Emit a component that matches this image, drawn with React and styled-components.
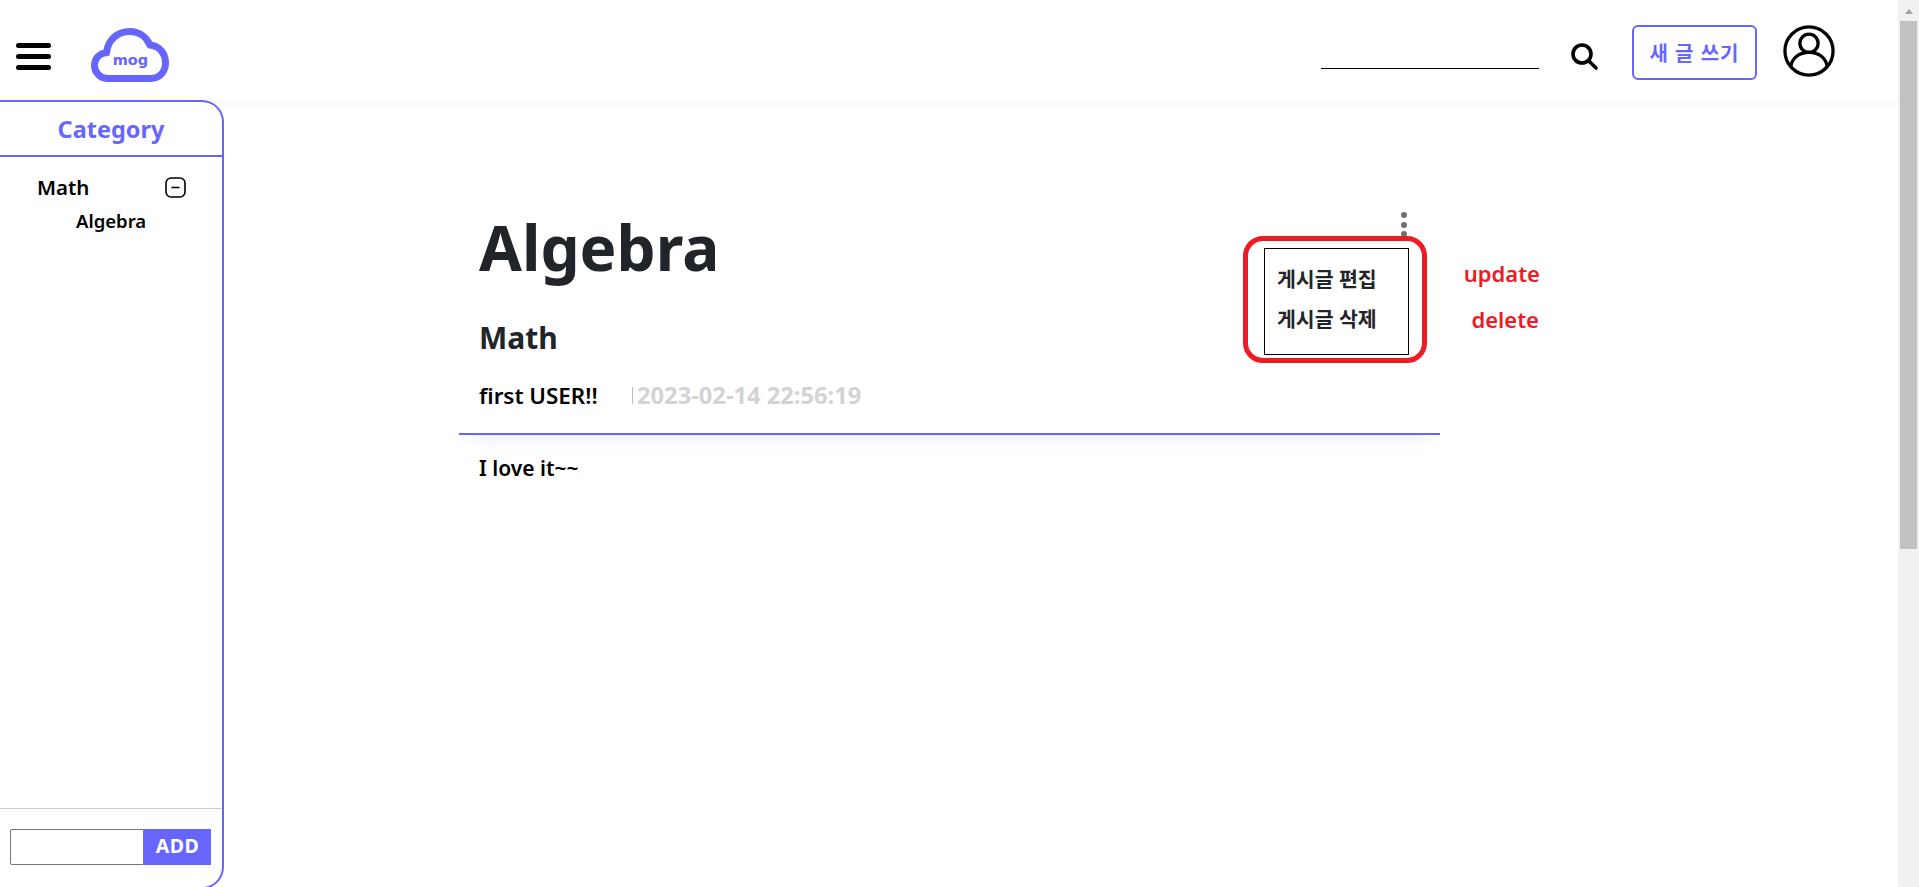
import React from 'react';
import styled, { createGlobalStyle } from 'styled-components';

const BLUE = '#6666ff';
const KR = '"Noto Sans", "Noto Sans CJK KR", sans-serif';

const GlobalStyle = createGlobalStyle`
    html, body {
        margin: 0;
        padding: 0;
        height: 100%;
        overflow: hidden;
        background: #fff;
    }
    #root {
        height: 100%;
    }
    * {
        box-sizing: border-box;
    }
`;

const Window = styled.div`
    display: flex;
    width: 100%;
    height: 887px;
    font-family: ${KR};
`;

const Page = styled.div`
    flex: 1;
    display: flex;
    flex-direction: column;
    min-width: 0;
`;

const ScrollTrack = styled.div`
    width: 21px;
    display: flex;
    flex-direction: column;
    align-items: center;
    background: #f1f1f1;
`;

const ScrollArrow = styled.div`
    width: 0;
    height: 0;
    margin: 9px 0 7px;
    border-left: 4.5px solid transparent;
    border-right: 4.5px solid transparent;
    border-bottom: 5px solid #a3a3a3;
`;

const ScrollThumb = styled.div`
    width: 17px;
    height: 528px;
    background: #c1c1c1;
`;

const Header = styled.header`
    height: 100px;
    display: flex;
    align-items: center;
    padding: 0 63px 0 16px;
    box-shadow: 0 4px 8px rgba(0, 0, 0, 0.03);
    background: #fff;
`;

const Menu = styled.button`
    width: 35px;
    height: 27px;
    margin-top: 13px;
    padding: 0;
    border: none;
    background: none;
    display: flex;
    flex-direction: column;
    justify-content: space-between;

    span {
        display: block;
        height: 5px;
        border-radius: 3px;
        background: #000;
    }
`;

const Logo = styled.svg`
    width: 78px;
    height: 55px;
    margin: 11px 0 0 40px;
`;

const HeaderRight = styled.div`
    margin-left: auto;
    display: flex;
    align-items: center;
`;

const SearchInput = styled.input`
    width: 218px;
    height: 32px;
    margin-top: 5px;
    border: none;
    border-bottom: 1px solid #000;
    outline: none;
    background: none;
`;

const SearchIcon = styled.svg`
    width: 30px;
    height: 30px;
    margin: 12px 0 0 30px;
`;

const WriteButton = styled.button`
    width: 125px;
    height: 55px;
    margin: 5px 0 0 33px;
    border: 2px solid ${BLUE};
    border-radius: 6px;
    background: #fff;
    color: ${BLUE};
    font-family: ${KR};
    font-size: 20px;
    font-weight: 700;
    letter-spacing: 1px;
`;

const Profile = styled.svg`
    width: 52px;
    height: 52px;
    margin: 2px 0 0 26px;
`;

const Body = styled.div`
    flex: 1;
    display: flex;
    min-height: 0;
`;

const Sidebar = styled.aside`
    width: 224px;
    display: flex;
    flex-direction: column;
    border: 2px solid ${BLUE};
    border-left: none;
    border-radius: 0 22px 22px 0;
    margin-bottom: -2px;
    background: #fff;
`;

const SidebarTitle = styled.div`
    height: 55px;
    display: flex;
    align-items: center;
    justify-content: center;
    border-bottom: 2px solid ${BLUE};
    color: ${BLUE};
    font-size: 23.5px;
    font-weight: 700;
`;

const CategoryList = styled.div`
    flex: 1;
    padding: 15px 37px 0;
`;

const CategoryRow = styled.div`
    display: flex;
    align-items: center;
    justify-content: space-between;
    height: 30px;
    font-size: 20.5px;
    font-weight: 600;
    color: #000;
`;

const MinusBox = styled.svg`
    width: 21px;
    height: 21px;
    margin-right: -1px;
`;

const SubCategory = styled.div`
    margin: 6px 0 0 39px;
    font-size: 18.5px;
    font-weight: 600;
    color: #000;
`;

const AddBar = styled.div`
    height: 79px;
    display: flex;
    padding: 20px 0 0 10px;
    border-top: 1px solid #ccc;
`;

const AddInput = styled.input`
    width: 134px;
    height: 36px;
    border: 1px solid #767676;
    border-radius: 2px 0 0 2px;
    outline: none;
`;

const AddButton = styled.button`
    width: 67px;
    height: 36px;
    padding: 0 0 4px;
    border: none;
    background: ${BLUE};
    color: #fff;
    font-family: ${KR};
    font-size: 19.5px;
    font-weight: 700;
    letter-spacing: 0.5px;
`;

const Main = styled.main`
    flex: 1;
    padding: 107px 0 0 235px;
`;

const Article = styled.article`
    position: relative;
    width: 981px;
`;

const ArticleHead = styled.div`
    padding: 0 0 0 20px;
    border-bottom: 2px solid ${BLUE};
    box-shadow: 0 16px 16px -14px rgba(102, 102, 255, 0.14);
    height: 228px;
`;

const Title = styled.h1`
    margin: 0;
    padding-top: 1px;
    font-size: 62px;
    line-height: 78px;
    font-weight: 700;
    color: #212529;
`;

const CategoryName = styled.h2`
    margin: 32px 0 0;
    font-size: 30px;
    line-height: 40px;
    font-weight: 700;
    color: #212529;
`;

const Meta = styled.div`
    display: flex;
    align-items: center;
    margin-top: 22px;
    height: 30px;
`;

const Author = styled.span`
    width: 153px;
    font-size: 22.4px;
    font-weight: 600;
    color: #000;
`;

const DateText = styled.span`
    padding-left: 4px;
    border-left: 1px solid #bbb;
    line-height: 17px;
    font-size: 23.7px;
    font-weight: 700;
    color: #d3d3d3;
    white-space: nowrap;
`;

const Content = styled.p`
    margin: 19px 0 0 20px;
    font-size: 21px;
    font-weight: 600;
    color: #000;
`;

const Kebab = styled.div`
    position: absolute;
    top: 5px;
    left: 942px;
    width: 6px;
    display: flex;
    flex-direction: column;
    gap: 3.5px;

    i {
        display: block;
        width: 6px;
        height: 6px;
        border-radius: 50%;
        background: #707070;
    }
`;

const Highlight = styled.div`
    position: absolute;
    top: 29px;
    left: 784px;
    width: 184px;
    height: 127px;
    border: 5px solid #ed1c24;
    border-radius: 20px;
    background: #fff;
    padding: 7px 0 0 16px;
`;

const Dropdown = styled.ul`
    margin: 0;
    padding: 17px 0 0 12px;
    list-style: none;
    width: 145px;
    height: 107px;
    border: 1px solid #000;
    background: #fff;
`;

const DropdownItem = styled.li`
    height: 40px;
    line-height: 27px;
    font-size: 20.5px;
    font-weight: 700;
    color: #212529;
    white-space: nowrap;
`;

const Note = styled.span`
    position: absolute;
    right: ${(p) => p.$right}px;
    top: ${(p) => p.$top}px;
    color: #ed1c24;
    font-size: 22px;
    font-weight: 600;
    line-height: 30px;
`;

export default function App() {
    return (
        <>
            <GlobalStyle />
            <Window>
                <Page>
                    <Header>
                        <Menu aria-label="menu">
                            <span />
                            <span />
                            <span />
                        </Menu>
                        <Logo viewBox="0 0 78 55">
                            <path
                                d="M16 50.500 C9 50.500 3.500 44 3.500 37.500 C3.500 30 9 25.500 15.500 24.500 C17 12 26 3.500 39 3.500 C47 3.500 55 8 59 17 C69 18 74.500 26 74.500 35 C74.500 44 68 50.500 60 50.500 Z"
                                fill="#fff"
                                stroke={BLUE}
                                strokeWidth="7"
                            />
                            <text
                                x="39.500"
                                y="37"
                                textAnchor="middle"
                                fontFamily="'DejaVu Sans', sans-serif"
                                fontWeight="700"
                                fontSize="14.500"
                                fill={BLUE}
                            >
                                mog
                            </text>
                        </Logo>
                        <HeaderRight>
                            <SearchInput />
                            <SearchIcon viewBox="0 0 30 30" fill="none" stroke="#000" strokeWidth="3.600" strokeLinecap="round">
                                <circle cx="13" cy="13" r="9" />
                                <path d="M20 20 L27 27" />
                            </SearchIcon>
                            <WriteButton>새 글 쓰기</WriteButton>
                            <Profile viewBox="0 0 54 54" fill="none" stroke="#000" strokeWidth="3.400">
                                <circle cx="27" cy="27" r="25" />
                                <circle cx="27" cy="19" r="9.500" />
                                <path d="M8 44 C9 34 17 28.500 27 28.500 C37 28.500 45 34 46 44" />
                            </Profile>
                        </HeaderRight>
                    </Header>
                    <Body>
                        <Sidebar>
                            <SidebarTitle>Category</SidebarTitle>
                            <CategoryList>
                                <CategoryRow>
                                    Math
                                    <MinusBox viewBox="0 0 21 21" fill="none" stroke="#000" strokeWidth="1.600">
                                        <rect x="1" y="1" width="19" height="19" rx="5" />
                                        <path d="M6.500 10.500 H14.500" />
                                    </MinusBox>
                                </CategoryRow>
                                <SubCategory>Algebra</SubCategory>
                            </CategoryList>
                            <AddBar>
                                <AddInput />
                                <AddButton>ADD</AddButton>
                            </AddBar>
                        </Sidebar>
                        <Main>
                            <Article>
                                <ArticleHead>
                                    <Title>Algebra</Title>
                                    <CategoryName>Math</CategoryName>
                                    <Meta>
                                        <Author>first USER!!</Author>
                                        <DateText>2023-02-14 22:56:19</DateText>
                                    </Meta>
                                </ArticleHead>
                                <Content>I love it~~</Content>
                                <Kebab>
                                    <i />
                                    <i />
                                    <i />
                                </Kebab>
                                <Highlight>
                                    <Dropdown>
                                        <DropdownItem>게시글 편집</DropdownItem>
                                        <DropdownItem>게시글 삭제</DropdownItem>
                                    </Dropdown>
                                </Highlight>
                                <Note $right={-100} $top={51}>update</Note>
                                <Note $right={-99} $top={97}>delete</Note>
                            </Article>
                        </Main>
                    </Body>
                </Page>
                <ScrollTrack>
                    <ScrollArrow />
                    <ScrollThumb />
                </ScrollTrack>
            </Window>
        </>
    );
}
